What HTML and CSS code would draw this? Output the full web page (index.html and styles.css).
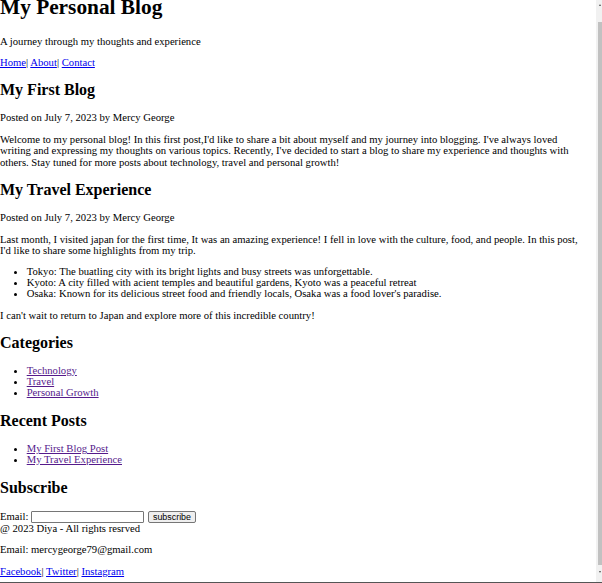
FILE: index.html
```html
<!DOCTYPE html>
<html lang="en">
<head>
  <meta charset="UTF-8">
  <meta name="viewport" content="width=device-width, initial-scale=1.0">
  <title>My Personal Blog</title>
  <link rel="stylesheet" href="styles.css">
</head>
<body>
  <div class="window">
    <div class="page">
      <header>
        <h1>My Personal Blog</h1>
        <p class="tagline">A journey through my thoughts and experience</p>
        <nav class="nav">
          <a href="#">Home</a>| <a href="#">About</a>| <a href="#">Contact</a>
        </nav>
      </header>

      <main>
        <article>
          <h2 class="first">My First Blog</h2>
          <p class="meta">Posted on July 7, 2023 by Mercy George</p>
          <p class="body-text">Welcome to my personal blog! In this first post,I'd like to share a bit about myself and my journey into blogging. I've always loved writing and expressing my thoughts on various topics. Recently, I've decided to start a blog to share my experience and thoughts with others. Stay tuned for more posts about technology, travel and personal growth!</p>
        </article>
        <article>
          <h2 class="after-text">My Travel Experience</h2>
          <p class="meta">Posted on July 7, 2023 by Mercy George</p>
          <p class="body-text">Last month, I visited japan for the first time, It was an amazing experience! I fell in love with the culture, food, and people. In this post, I'd like to share some highlights from my trip.</p>
          <ul class="highlights">
            <li>Tokyo: The buatling city with its bright lights and busy streets was unforgettable.</li>
            <li>Kyoto: A city filled with acient temples and beautiful gardens, Kyoto was a peaceful retreat</li>
            <li>Osaka: Known for its delicious street food and friendly locals, Osaka was a food lover's paradise.</li>
          </ul>
          <p class="closing">I can't wait to return to Japan and explore more of this incredible country!</p>
        </article>
      </main>

      <aside>
        <section>
          <h2 class="after-text">Categories</h2>
          <ul class="links">
            <li><a class="visited" href="#">Technology</a></li>
            <li><a class="visited" href="#">Travel</a></li>
            <li><a class="visited" href="#">Personal Growth</a></li>
          </ul>
        </section>
        <section>
          <h2 class="after-list">Recent Posts</h2>
          <ul class="links">
            <li><a class="visited" href="#">My First Blog Post</a></li>
            <li><a class="visited" href="#">My Travel Experience</a></li>
          </ul>
        </section>
        <section>
          <h2 class="after-list">Subscribe</h2>
          <form class="subscribe">
            <label for="email">Email:</label>
            <input type="email" id="email" name="email">
            <button type="submit">subscribe</button>
          </form>
        </section>
      </aside>

      <footer>
        <p class="copyright">@ 2023 Diya - All rights resrved</p>
        <p class="contact">Email: mercygeorge79@gmail.com</p>
        <p class="social">
          <a href="#">Facebook</a>| <a href="#">Twitter</a>| <a href="#">Instagram</a>
        </p>
      </footer>
    </div>

    <div class="scrollbar">
      <span class="arrow up"></span>
      <div class="thumb"></div>
      <span class="arrow down"></span>
    </div>
  </div>
</body>
</html>
```

FILE: styles.css
```css
body {
  margin: 0;
  font-family: "Liberation Serif", "Times New Roman", serif;
  font-size: 10.67px;
  line-height: 11.2px;
  color: #000;
  background: #fff;
}

.window {
  display: flex;
  height: 582px;
  overflow: hidden;
  border-bottom: 1px solid #555;
}

.page {
  flex: 1;
  padding-right: 10px;
}

a {
  color: #0000ee;
}

a.visited {
  color: #551a8b;
}

h1 {
  font-size: 21.33px;
  line-height: 15px;
  margin: 0;
}

h2 {
  font-size: 16px;
  line-height: 16px;
  margin: 0;
}

p,
ul {
  margin: 0;
}

.tagline {
  margin-top: 20.8px;
}

.nav {
  margin-top: 10px;
}

h2.first {
  margin-top: 14.2px;
}

h2.after-text {
  margin-top: 14px;
}

h2.after-list {
  margin-top: 15.5px;
}

.meta {
  margin-top: 13.7px;
}

.body-text {
  margin-top: 11px;
}

ul {
  padding-left: 26.7px;
  line-height: 10.7px;
}

.highlights {
  margin-top: 10px;
}

.closing {
  margin-top: 11.6px;
}

.links {
  margin-top: 14.3px;
}

/* subscribe form */
.subscribe {
  display: flex;
  align-items: flex-start;
  gap: 2.6px;
  height: 12.4px;
  margin-top: 14.4px;
}

.subscribe label {
  line-height: 10px;
}

.subscribe input {
  box-sizing: border-box;
  width: 113px;
  height: 12px;
  margin: 0;
  padding: 0 2px;
  border: 1px solid #767676;
  border-radius: 1px;
  font-size: 9px;
}

.subscribe button {
  box-sizing: border-box;
  height: 12.5px;
  margin: 0 0 0 1.4px;
  padding: 0 4px;
  font-family: "Liberation Sans", Arial, sans-serif;
  font-size: 8.9px;
  line-height: 10px;
  color: #000;
  background: #efefef;
  border: 1px solid #767676;
  border-radius: 2px;
}

.copyright {
  margin-top: 0;
}

.contact {
  margin-top: 9.8px;
}

.social {
  margin-top: 10.4px;
}

/* fake window scrollbar at the right edge */
.scrollbar {
  width: 6px;
  background: #f1f1f1;
  display: flex;
  flex-direction: column;
  align-items: flex-end;
}

.thumb {
  width: 4px;
  height: 543px;
  background: #c1c1c1;
}

.arrow {
  display: block;
  width: 0;
  height: 0;
  margin-right: 1px;
  border-left: 1px solid transparent;
  border-right: 1px solid transparent;
}

.arrow.up {
  margin-top: 4px;
  margin-bottom: 16px;
  border-bottom: 2px solid #505050;
}

.arrow.down {
  margin-top: 6px;
  border-top: 2px solid #505050;
}
```
